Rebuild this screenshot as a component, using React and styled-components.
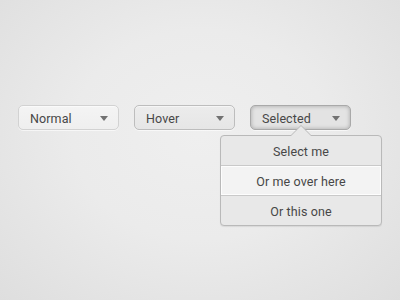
import React from "react";
import styled, { createGlobalStyle, css } from "styled-components";

const GlobalStyle = createGlobalStyle`
  html, body {
    margin: 0;
    padding: 0;
    width: 400px;
    height: 300px;
    overflow: hidden;
  }
  body {
    background: radial-gradient(ellipse at 50% 45%, #efefef 0%, #ebebeb 45%, #dedede 100%);
    font-family: Roboto, "Liberation Sans", sans-serif;
  }
`;

const Stage = styled.div`
  width: 400px;
  height: 300px;
  box-sizing: border-box;
  padding: 105px 0 0 18px;
`;

const Row = styled.div`
  display: flex;
  gap: 15px;
`;

const Holder = styled.div`
  position: relative;
`;

const variants = {
  normal: css`
    background: linear-gradient(#f4f4f4, #efefef);
    border: 1px solid #d2d2d2;
    box-shadow: inset 0 1px 0 #fafafa, 0 1px 0 rgba(255, 255, 255, 0.6);
  `,
  hover: css`
    background: linear-gradient(#ececec, #e6e6e6);
    border: 1px solid #bdbdbd;
    box-shadow: inset 0 1px 0 #f6f6f6, 0 1px 0 rgba(255, 255, 255, 0.6);
  `,
  selected: css`
    background: #e3e3e3;
    border: 1px solid #a9a9a9;
    box-shadow: inset 0 0 4px rgba(0, 0, 0, 0.28), 0 1px 0 rgba(255, 255, 255, 0.6);
  `,
};

const Button = styled.div`
  width: 101px;
  height: 25px;
  box-sizing: border-box;
  border-radius: 5px;
  display: flex;
  align-items: center;
  justify-content: space-between;
  padding: 1px 10px 0 11px;
  font-size: 12.5px;
  letter-spacing: 0.1px;
  color: #474747;
  ${(p) => variants[p.$variant]}
`;

const Caret = styled.span`
  width: 0;
  height: 0;
  border-left: 4px solid transparent;
  border-right: 4px solid transparent;
  border-top: 5px solid #727272;
`;

const Menu = styled.div`
  position: absolute;
  left: -30px;
  top: 30px;
  width: 162px;
  box-sizing: border-box;
  background: #e8e8e8;
  border: 1px solid #b9b9b9;
  border-radius: 4px;
  box-shadow: 0 1px 1px rgba(0, 0, 0, 0.08);

  &::before,
  &::after {
    content: "";
    position: absolute;
    left: 70px;
    width: 0;
    height: 0;
    border-left: 10px solid transparent;
    border-right: 10px solid transparent;
  }
  &::before {
    top: -11px;
    border-bottom: 10px solid #b9b9b9;
  }
  &::after {
    top: -10px;
    border-bottom: 10px solid #e8e8e8;
  }
`;

const Item = styled.div`
  height: 29px;
  display: flex;
  align-items: center;
  justify-content: center;
  padding-top: 2px;
  box-sizing: border-box;
  font-size: 12.5px;
  letter-spacing: 0.1px;
  color: #474747;
  & + & {
    border-top: 1px solid #c9c9c9;
    height: 30px;
  }
  ${(p) =>
    p.$active &&
    css`
      background: #f3f3f3;
      box-shadow: inset 0 0 0 1px #fdfdfd;
    `}
`;

const Select = ({ label, variant }) => (
  <Button $variant={variant}>
    {label}
    <Caret />
  </Button>
);

export default function App() {
  return (
    <>
      <GlobalStyle />
      <Stage>
        <Row>
          <Select label="Normal" variant="normal" />
          <Select label="Hover" variant="hover" />
          <Holder>
            <Select label="Selected" variant="selected" />
            <Menu>
              <Item>Select me</Item>
              <Item $active>Or me over here</Item>
              <Item>Or this one</Item>
            </Menu>
          </Holder>
        </Row>
      </Stage>
    </>
  );
}
